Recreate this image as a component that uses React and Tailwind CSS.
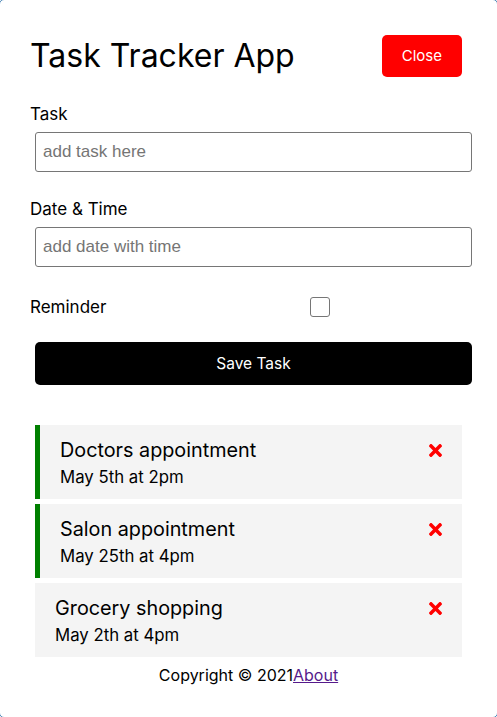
import { FaTimes } from 'react-icons/fa';

const tasks = [
  { id: 1, text: 'Doctors appointment', day: 'May 5th at 2pm', reminder: true },
  { id: 2, text: 'Salon appointment', day: 'May 25th at 4pm', reminder: true },
  { id: 3, text: 'Grocery shopping', day: 'May 2th at 4pm', reminder: false },
];

function Task({ task }) {
  return (
    <div
      className={`bg-[#f4f4f4] m-[5px] py-[10px] px-5 cursor-pointer ${
        task.reminder ? 'border-l-[5px] border-[#008000]' : ''
      }`}
    >
      <h3 className="flex items-center justify-between text-[19.8px] leading-[30px] font-normal">
        {task.text}
        <FaTimes className="w-[13px] h-[19px] text-[#ff0000] cursor-pointer" />
      </h3>
      <p className="text-[16.8px] leading-6">{task.day}</p>
    </div>
  );
}

export default function App() {
  return (
    <div className="w-[497px] h-[717px] overflow-hidden bg-white text-black font-['Inter',sans-serif]">
      <div className="-m-px min-h-[719px] border border-[steelblue] rounded-[5px] p-[30px]">
        {/* Header */}
        <header className="flex items-center justify-between mb-5">
          <h1 className="text-[32px] leading-[48px] font-normal">Task Tracker App</h1>
          <button className="m-[5px] px-5 py-[10px] h-[42px] rounded-[5px] bg-[#ff0000] text-white text-[15px] leading-[22px]">
            Close
          </button>
        </header>

        {/* Add task form */}
        <form className="mb-10" onSubmit={(e) => e.preventDefault()}>
          <div className="my-5 flex flex-col">
            <label className="text-[17px] leading-[25px]">Task</label>
            <input
              type="text"
              placeholder="add task here"
              className="w-full h-10 m-[5px] py-[3px] px-[7px] text-[17px] border border-[#767676] rounded-[3px] font-['Liberation_Sans',Arial,sans-serif] placeholder:text-[#757575]"
            />
          </div>
          <div className="my-5 flex flex-col">
            <label className="text-[17px] leading-[25px]">Date &amp; Time</label>
            <input
              type="text"
              placeholder="add date with time"
              className="w-full h-10 m-[5px] py-[3px] px-[7px] text-[17px] border border-[#767676] rounded-[3px] font-['Liberation_Sans',Arial,sans-serif] placeholder:text-[#757575]"
            />
          </div>
          <div className="my-5 flex items-center justify-between">
            <label className="flex-1 text-[17px] leading-[25px]">Reminder</label>
            <div className="flex-[2] m-[5px] h-5 flex justify-center">
              <input
                type="checkbox"
                className="appearance-none w-5 h-5 border border-[#767676] rounded-[3px] bg-white"
              />
            </div>
          </div>
          <button
            type="submit"
            className="block w-full m-[5px] h-[43px] rounded-[5px] bg-black text-white text-[15.5px]"
          >
            Save Task
          </button>
        </form>

        {/* Tasks */}
        {tasks.map((task) => (
          <Task key={task.id} task={task} />
        ))}

        {/* Footer */}
        <footer className="mt-[6px] text-center text-base leading-6">
          <p>
            Copyright © 2021
            <a href="#about" className="text-[#551a8b] underline">
              About
            </a>
          </p>
        </footer>
      </div>
    </div>
  );
}
